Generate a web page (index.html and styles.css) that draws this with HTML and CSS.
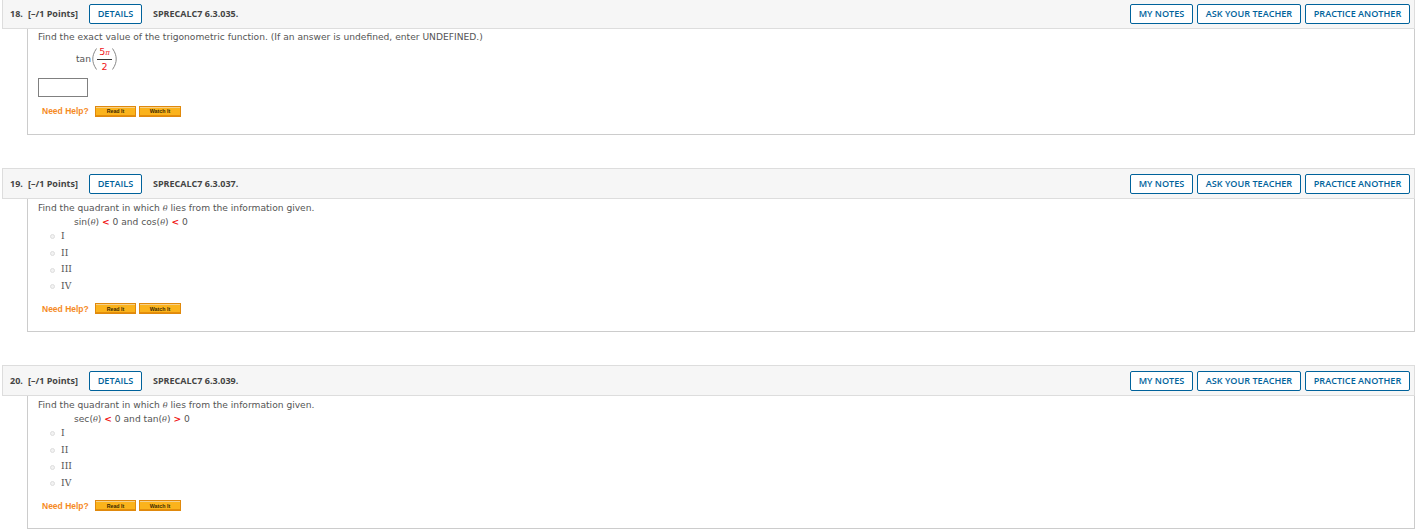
FILE: index.html
```html
<!DOCTYPE html>
<html lang="en">
<head>
<meta charset="utf-8">
<title>Questions</title>
<link rel="stylesheet" href="styles.css">
</head>
<body>
<main class="list">
  <section class="question">
    <header class="qhead">
      <span class="num">18.</span><span class="pts">[–/1 Points]</span>
      <button class="btn details">DETAILS</button>
      <span class="code">SPRECALC7 6.3.035.</span>
      <div class="actions"><button class="btn b-notes">MY NOTES</button><button class="btn b-ask">ASK YOUR TEACHER</button><button class="btn b-prac">PRACTICE ANOTHER</button></div>
    </header>
    <div class="body body-a">
      <p class="prompt">Find the exact value of the trigonometric function. (If an answer is undefined, enter UNDEFINED.)</p>
      <div class="expr-frac">
        <span class="fn">tan</span>
        <svg class="paren" width="5" height="22" viewBox="0 0 5 22"><path d="M4.500 .5C1.500 5 .8 8 .8 11S1.500 17 4.500 21.500" fill="none" stroke="#888" stroke-width="1"/></svg>
        <span class="frac"><span class="top">5<i>π</i></span><span class="bot">2</span></span>
        <svg class="paren" width="5" height="22" viewBox="0 0 5 22"><path d="M.5 .5C3.500 5 4.200 8 4.200 11S3.500 17 .5 21.500" fill="none" stroke="#888" stroke-width="1"/></svg>
      </div>
      <div class="answer"></div>
      <div class="help"><span class="need">Need Help?</span><span class="hbtn read">Read It</span><span class="hbtn watch">Watch It</span></div>
    </div>
  </section>

  <section class="question">
    <header class="qhead">
      <span class="num">19.</span><span class="pts">[–/1 Points]</span>
      <button class="btn details">DETAILS</button>
      <span class="code">SPRECALC7 6.3.037.</span>
      <div class="actions"><button class="btn b-notes">MY NOTES</button><button class="btn b-ask">ASK YOUR TEACHER</button><button class="btn b-prac">PRACTICE ANOTHER</button></div>
    </header>
    <div class="body">
      <p class="prompt">Find the quadrant in which <i class="th">θ</i> lies from the information given.</p>
      <p class="expr">sin(<i class="th">θ</i>) <b class="red">&lt;</b> 0 and cos(<i class="th">θ</i>) <b class="red">&lt;</b> 0</p>
      <ul class="opts">
        <li><span class="radio"></span>I</li>
        <li><span class="radio"></span>II</li>
        <li><span class="radio"></span>III</li>
        <li><span class="radio"></span>IV</li>
      </ul>
      <div class="help"><span class="need">Need Help?</span><span class="hbtn read">Read It</span><span class="hbtn watch">Watch It</span></div>
    </div>
  </section>

  <section class="question">
    <header class="qhead">
      <span class="num">20.</span><span class="pts">[–/1 Points]</span>
      <button class="btn details">DETAILS</button>
      <span class="code">SPRECALC7 6.3.039.</span>
      <div class="actions"><button class="btn b-notes">MY NOTES</button><button class="btn b-ask">ASK YOUR TEACHER</button><button class="btn b-prac">PRACTICE ANOTHER</button></div>
    </header>
    <div class="body">
      <p class="prompt">Find the quadrant in which <i class="th">θ</i> lies from the information given.</p>
      <p class="expr">sec(<i class="th">θ</i>) <b class="red">&lt;</b> 0 and tan(<i class="th">θ</i>) <b class="red">&gt;</b> 0</p>
      <ul class="opts">
        <li><span class="radio"></span>I</li>
        <li><span class="radio"></span>II</li>
        <li><span class="radio"></span>III</li>
        <li><span class="radio"></span>IV</li>
      </ul>
      <div class="help"><span class="need">Need Help?</span><span class="hbtn read">Read It</span><span class="hbtn watch">Watch It</span></div>
    </div>
  </section>
</main>
</body>
</html>
```
FILE: styles.css
```css
* { box-sizing: border-box; }
html, body { margin: 0; padding: 0; background: #fff; overflow: hidden; }
body { font-family: "DejaVu Sans", sans-serif; color: #555; height: 532px; }
.list { margin: -2px 9px 0 2px; display: flex; flex-direction: column; gap: 33px; }
.qhead {
  height: 31px; display: flex; align-items: center;
  background: #f6f6f6; border: 1px solid #ddd;
  padding: 0 4px 0 7px;
  font-family: "Open Sans", sans-serif; font-weight: 700; color: #444; font-size: 9px;
}
.num { width: 18px; }
.pts { width: 61px; }
.btn {
  font-family: "Open Sans", sans-serif; font-weight: 600; font-size: 9.100px; color: #00629b;
  height: 20px; background: #fff; border: 1px solid #00629b; border-radius: 2px; padding: 0; margin: 0; white-space: nowrap;
}
.details { width: 53px; }
.b-notes { width: 63px; }
.b-ask { width: 104px; }
.b-prac { width: 105px; }
.code { margin-left: 11px; }
.actions { margin-left: auto; display: flex; gap: 4px; }
.body {
  margin-left: 25px; height: 133px; border: 1px solid #ccc; border-top: 0;
  padding: 3px 0 0 10px; font-size: 9.150px; background: #fff;
}
.body-a { height: 106px; padding-top: 2px; }
.prompt { margin: 0; line-height: 12px; }
.expr { margin: 1px 0 0 36px; line-height: 12px; }
.th { font-family: "DejaVu Serif", serif; font-size: 8px; }
.red { color: #f01010; font-weight: 700; }
.expr-frac { display: flex; align-items: center; margin: 2px 0 0 38px; height: 28px; }
.fn { margin-right: 1px; }
.frac { display: flex; flex-direction: column; align-items: center; color: #f01418; font-weight: 400; width: 15px; font-size: 9.500px; }
.frac i { font-family: "DejaVu Serif", serif; font-size: 7px; }
.top { border-bottom: 1px solid #333; width: 100%; text-align: center; line-height: 12px; }
.bot { line-height: 13px; }
.answer { width: 50px; height: 19px; border: 1px solid #808080; margin-top: 5px; }
.opts { list-style: none; margin: -2px 0 0 12px; padding: 0; font-family: "DejaVu Serif", serif; font-size: 9.200px; }
.opts li { height: 16.700px; display: flex; align-items: center; }
.radio { width: 5px; height: 5px; border: 1px solid #ddd; border-radius: 50%; background: #f2f2f2; margin-right: 6px; margin-top: 3px; }
.help { display: flex; align-items: center; margin: 9px 0 0 4px; height: 12px; }
.body-a .help { margin-top: 8px; }
.need { color: #f58a1f; font-family: "Liberation Sans", sans-serif; font-weight: 700; font-size: 8.500px; width: 53px; }
.hbtn {
  height: 11px; display: flex; align-items: center; justify-content: center;
  font-family: "Liberation Sans", sans-serif; font-weight: 700; font-size: 5.300px; color: #3a2800;
  background: linear-gradient(#f5d08a 0 1px, #fbb31c 1px 8px, #e48e0c 8px);
  border: 1px solid #e0890c;
}
.read { width: 41px; margin-right: 3px; }
.watch { width: 42px; }
```
